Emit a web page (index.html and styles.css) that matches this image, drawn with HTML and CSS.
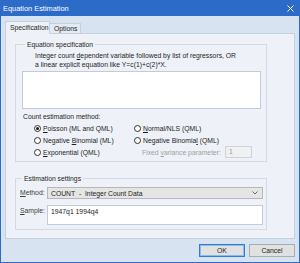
FILE: index.html
```html
<!DOCTYPE html>
<html lang="en">

<head>
    <meta charset="UTF-8">
    <title>Equation Estimation</title>
    <link rel="stylesheet" href="styles.css">
</head>

<body>
    <div class="window">

        <div class="titlebar">
            <span class="title">Equation Estimation</span>
            <svg class="close" width="7" height="7" viewBox="0 0 7 7">
                <path d="M0.5 0.5 L6.5 6.5 M6.5 0.5 L0.5 6.5" stroke="#fff" stroke-width="1" fill="none" />
            </svg>
        </div>

        <div class="content">

            <div class="tabs">
                <div class="tab active">Specification</div>
                <div class="tab">Options</div>
            </div>

            <div class="panel">

                <fieldset class="group spec">
                    <legend>Equation specification</legend>
                    <p class="hint">
                        Integer count <u>d</u>ependent variable followed by list of regressors, OR<br>
                        a linear explicit equation like Y=c(1)+c(2)*X.
                    </p>
                    <div class="textarea"></div>

                    <div class="method-title">Count estimation method:</div>
                    <div class="radios">
                        <div class="radio-col">
                            <label class="radio"><span class="dot checked"></span><span><u>P</u>oisson (ML and QML)</span></label>
                            <label class="radio"><span class="dot"></span><span>Negative <u>B</u>inomial (ML)</span></label>
                            <label class="radio"><span class="dot"></span><span><u>E</u>xponential (QML)</span></label>
                        </div>
                        <div class="radio-col">
                            <label class="radio"><span class="dot"></span><span><u>N</u>ormal/NLS (QML)</span></label>
                            <label class="radio"><span class="dot"></span><span>Negative Binomia<u>l</u> (QML)</span></label>
                            <div class="fixed-var">
                                <span class="disabled">Fixed <u>v</u>ariance parameter:</span>
                                <span class="small-input">1</span>
                            </div>
                        </div>
                    </div>
                </fieldset>

                <fieldset class="group settings">
                    <legend>Estimation settings</legend>
                    <div class="row">
                        <span class="field-label"><u>M</u>ethod:</span>
                        <div class="select">
                            <span>COUNT&nbsp; - &nbsp;Integer Count Data</span>
                            <svg width="6" height="4" viewBox="0 0 6 4">
                                <path d="M0.5 0.5 L3 3 L5.5 0.5" stroke="#606060" stroke-width="0.9" fill="none" />
                            </svg>
                        </div>
                    </div>
                    <div class="row">
                        <span class="field-label"><u>S</u>ample:</span>
                        <div class="sample">1947q1 1994q4</div>
                    </div>
                </fieldset>

            </div>

            <div class="buttons">
                <button class="btn default">OK</button>
                <button class="btn">Cancel</button>
            </div>

        </div>
    </div>
</body>

</html>
```

FILE: styles.css
```css
* {
    margin: 0;
    padding: 0;
    box-sizing: border-box;
}

body {
    width: 300px;
    height: 263px;
    font-family: "Liberation Sans", Arial, sans-serif;
    font-size: 6.8px;
    color: #1e1e1e;
    background: #fff;
}

u {
    text-decoration-thickness: 0.6px;
    text-underline-offset: 1px;
}

.window {
    width: 300px;
    height: 263px;
    display: flex;
    flex-direction: column;
    background: #d8e3f1;
    border: 1px solid #2c6bc8;
    border-top: none;
}

.titlebar {
    flex-shrink: 0;
    height: 16px;
    margin: 0 -1px;
    padding: 0 6px 0 3px;
    display: flex;
    align-items: center;
    justify-content: space-between;
    background: #2c6bc8;
    color: #fff;
    font-size: 7.4px;
}

.content {
    flex: 1;
    display: flex;
    flex-direction: column;
    padding: 5px 4px 0 4px;
}

/* tabs */
.tabs {
    display: flex;
    align-items: flex-end;
    height: 12px;
}

.tab {
    height: 10px;
    padding: 0 3px 0 4px;
    line-height: 10px;
    background: #e3eaf4;
    border: 1px solid #c7d0dd;
    border-bottom: none;
    border-left: none;
}

.tab.active {
    position: relative;
    z-index: 1;
    width: 45px;
    height: 13px;
    margin-bottom: -1px;
    line-height: 11px;
    background: #eef2f8;
    border-left: 1px solid #c7d0dd;
}

.panel {
    height: 206px;
    padding: 6px 27px 0 9px;
    background: #eef2f8;
    border: 1px solid #c7d0dd;
}

/* group boxes */
.group {
    border: 1px solid #d3dae4;
    padding: 0 5px 3px 6px;
    min-width: 0;
}

.group legend {
    padding: 0 2px;
    margin-left: 3px;
    line-height: 9px;
}

.hint {
    margin: 3px 0 0 13px;
    line-height: 8.5px;
    white-space: nowrap;
}

.textarea {
    height: 38px;
    margin-top: 2px;
    background: #fff;
    border: 1px solid #c3cbd6;
}

.method-title {
    height: 10px;
    margin-top: 3px;
    padding-left: 1px;
    line-height: 10px;
}

.radios {
    display: flex;
    padding-left: 12px;
}

.radio-col {
    display: flex;
    flex-direction: column;
}

.radio-col:first-child {
    width: 100px;
}

.radio {
    height: 12px;
    display: flex;
    align-items: center;
    gap: 2px;
    white-space: nowrap;
}

.dot {
    width: 7px;
    height: 7px;
    border: 1px solid #333;
    border-radius: 50%;
    background: #fff;
    display: flex;
    align-items: center;
    justify-content: center;
}

.dot.checked::after {
    content: "";
    width: 3px;
    height: 3px;
    border-radius: 50%;
    background: #1a1a1a;
}

.fixed-var {
    height: 12px;
    display: flex;
    align-items: center;
    gap: 4px;
    padding-left: 8px;
    white-space: nowrap;
}

.disabled {
    color: #a0a0a0;
}

.small-input {
    width: 27px;
    height: 12px;
    padding-left: 3px;
    line-height: 10px;
    color: #9a9a9a;
    background: #eef0f2;
    border: 1px solid #cfd3d8;
}

.settings {
    margin-top: 12px;
    padding: 4px 3px 4px 3px;
}

.row {
    display: flex;
    align-items: flex-start;
}

.row + .row {
    margin-top: 6px;
}

.field-label {
    width: 28px;
    padding-left: 1px;
    line-height: 11px;
    color: #404040;
}

.select {
    flex: 1;
    height: 12px;
    padding: 0 4px 0 3px;
    display: flex;
    align-items: center;
    justify-content: space-between;
    background: #e5e5e5;
    border: 1px solid #b7b7b7;
}

.sample {
    flex: 1;
    height: 20px;
    padding: 1px 3px;
    line-height: 9px;
    background: #fff;
    border: 1px solid #c3cbd6;
}

/* buttons */
.buttons {
    display: flex;
    justify-content: flex-end;
    gap: 4px;
    margin-top: 5px;
}

.btn {
    width: 46px;
    height: 13px;
    font-family: inherit;
    font-size: 6.8px;
    color: #1e1e1e;
    background: #e1e1e1;
    border: 1px solid #adadad;
}

.btn.default {
    border: 1px solid #2f7cd6;
    box-shadow: inset 0 0 0 1px #8fbbe9;
}
```
